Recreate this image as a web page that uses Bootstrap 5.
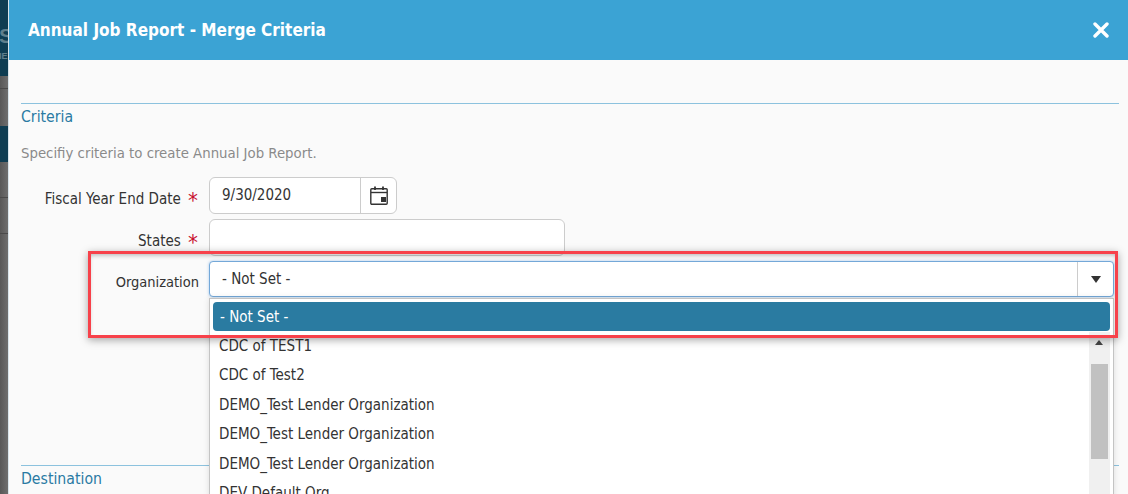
<!DOCTYPE html>
<html lang="en"><head><meta charset="utf-8">
<title>Annual Job Report - Merge Criteria</title>
<link rel="stylesheet" href="https://cdn.jsdelivr.net/npm/bootstrap@5.3.0/dist/css/bootstrap.min.css">
<style>
html,body{height:494px;overflow:hidden;background:#626262}
body{font-family:"DejaVu Sans","Noto Sans",sans-serif;font-stretch:condensed;font-size:15px;color:#333;position:relative}
.strip{width:8px;height:494px;flex:none;position:relative;overflow:hidden;background:linear-gradient(90deg,#585858,#6e6e6e)}
.strip-top{height:76px;background:#0f3d52}
.strip-grey{border-bottom:1px solid #4a4a4a}
.g1{height:13px}.g3{height:36px}.g4{height:36px}
.strip-bar{height:36px;background:#0f3d52;margin-top:37px}
.strip-s{position:absolute;left:-1px;top:22px;font:700 21px/28px "Liberation Sans",sans-serif;color:#5f7f8c}
.strip-e{position:absolute;left:-1px;top:51px;font:700 9px/10px "Liberation Sans",sans-serif;color:#5f7f8c}
.dlg{width:1120px;height:494px;background:#fafafa;flex:none;border-left:1px solid #d8e4ea}
.dlg-head{height:60px;background:#3ba3d4;color:#fff;padding:0 19px 0 19px}
.dlg-head h1{font-size:17px;font-weight:700;margin:0;font-family:"DejaVu Sans",sans-serif}
.dlg-body{padding:43px 9px 0 12px}
.sect{border-top:1px solid #8cc2de;color:#2a7aa3;font-size:15.7px;line-height:26px;height:25px}
.hint{color:#8a8a8a;margin:15px 0 14px;line-height:20px;height:20px;font-size:14.8px}
.frow{margin-bottom:5px}
.lbl{width:178px;text-align:right;padding-top:12px;line-height:20px;flex:none}
.lbl-org{font-size:14.5px;padding-top:11px}
.req{color:#c8102e;font-size:22px;line-height:14px;margin-left:3px;margin-right:1px;vertical-align:-4px}
.field{height:37px;border:1px solid #ccc;border-radius:6px;background:#fff;margin-left:10px}
.f-date{width:188px}
.f-state{width:356px}
.f-org{width:905px;height:36px;border-color:#74a8d8;border-radius:4px;box-shadow:0 0 3px rgba(80,150,220,.5)}
.fval{flex:1;padding:0 12px;line-height:35px}
.ficon{width:36px;border-left:1px solid #ccc}
.caret-d{width:0;height:0;border:5px solid transparent;border-bottom:0;border-top:7px solid #333}
.org-wrap{position:relative}
.droplist{position:absolute;left:188px;top:37px;width:905px;height:200px;background:#fff;border:1px solid #c4c4c4;overflow:hidden;box-shadow:0 0 6px rgba(0,0,0,.12)}
.opt-sel{position:absolute;left:3px;top:3px;right:3px;height:29px;background:#2a7ba1;color:#fff;border-radius:4px;line-height:31px;padding-left:7px}
.opt-list{padding:33px 0 0 9px;list-style:none;margin:0}
.opt-list li{height:29.4px;line-height:29.4px;white-space:nowrap}
.sbar{position:absolute;right:3px;top:33px;bottom:0;width:21px;background:#f0f0f0}
.sbar-thumb{position:absolute;left:2px;top:32px;width:17px;height:95px;background:#c1c1c1}
.sbar-up{position:absolute;left:6px;top:8px;width:0;height:0;border:4.5px solid transparent;border-top:0;border-bottom:5px solid #444}
.sect-dest{margin-top:168px}
.callout{position:absolute;left:88px;top:251px;width:1030px;height:87px;border:3px solid #f7414a;box-shadow:0 2px 8px rgba(0,0,0,.35),inset 0 3px 5px -2px rgba(0,0,0,.3);pointer-events:none}
</style></head>
<body class="d-flex">
<div class="strip">
 <div class="strip-top"></div><div class="strip-grey g1"></div><div class="strip-bar"></div><div class="strip-grey g3"></div><div class="strip-grey g4"></div>
 <span class="strip-s">S</span><span class="strip-e">IE</span>
</div>
<div class="dlg">
 <div class="dlg-head d-flex align-items-center justify-content-between">
  <h1>Annual Job Report - Merge Criteria</h1>
  <svg width="16" height="16" viewBox="0 0 16 16"><path d="M2 2 14 14M14 2 2 14" stroke="#fff" stroke-width="3.4" stroke-linecap="round"/></svg>
 </div>
 <div class="dlg-body">
  <div class="sect">Criteria</div>
  <p class="hint">Specifiy criteria to create Annual Job Report.</p>
  <div class="d-flex frow">
   <div class="lbl">Fiscal Year End Date <span class="req">*</span></div>
   <div class="field f-date d-flex"><div class="fval">9/30/2020</div>
    <div class="ficon d-flex align-items-center justify-content-center">
     <svg width="18" height="19" viewBox="0 0 18 19" fill="none"><rect x=".8" y="2.8" width="16.4" height="15.4" rx="1" stroke="#333" stroke-width="1.4"/><path d="M1 6.5H17" stroke="#333" stroke-width="1.4"/><path d="M5 .5V4M13 .5V4" stroke="#333" stroke-width="1.8"/><rect x="11" y="11" width="5" height="5" fill="#333"/></svg>
    </div></div>
  </div>
  <div class="d-flex frow">
   <div class="lbl">States <span class="req">*</span></div>
   <div class="field f-state"></div>
  </div>
  <div class="d-flex org-wrap">
   <div class="lbl lbl-org">Organization</div>
   <div class="field f-org d-flex"><div class="fval">- Not Set -</div>
    <div class="ficon d-flex align-items-center justify-content-center"><span class="caret-d"></span></div></div>
   <div class="droplist">
    <div class="opt-sel">- Not Set -</div>
    <ul class="opt-list">
     <li>CDC of TEST1</li><li>CDC of Test2</li><li>DEMO_Test Lender Organization</li><li>DEMO_Test Lender Organization</li><li>DEMO_Test Lender Organization</li><li>DEV Default Org</li>
    </ul>
    <div class="sbar"><div class="sbar-up"></div><div class="sbar-thumb"></div></div>
   </div>
  </div>
  <div class="sect sect-dest">Destination</div>
 </div>
</div>
<div class="callout"></div>
<script src="https://cdn.jsdelivr.net/npm/bootstrap@5.3.0/dist/js/bootstrap.bundle.min.js"></script>
</body></html>
